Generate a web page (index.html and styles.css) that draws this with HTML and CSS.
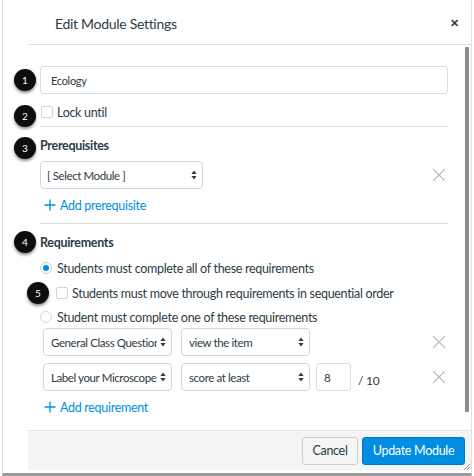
FILE: index.html
```html
<!DOCTYPE html>
<html>
<head>
<meta charset="utf-8">
<link rel="stylesheet" href="styles.css">
</head>
<body>
<div class="frame">
  <div class="dialog">
    <div class="header">
      <span class="title">Edit Module Settings</span>
      <span class="close">&#x2715;</span>
    </div>
    <div class="body">
      <div class="content">
        <div class="row name-row">
          <span class="badge b1">1</span>
          <div class="text-input name-input">Ecology</div>
        </div>
        <div class="row line lock-row">
          <span class="badge b2">2</span>
          <span class="checkbox"></span>
          <span class="label">Lock until</span>
        </div>
        <div class="divider"></div>
        <div class="row line heading-row first">
          <span class="badge b3">3</span>
          <span class="heading">Prerequisites</span>
        </div>
        <div class="row prereq-row">
          <div class="select sel-module"><span class="val">[ Select Module ]</span><svg class="arrows" width="6" height="10" viewBox="0 0 6 10"><path d="M3 0.5 L5.6 4 H0.4 Z M3 9.5 L5.6 6 H0.4 Z" fill="#2d3b45"/></svg></div>
          <svg class="remove" width="14" height="14" viewBox="0 0 14 14"><path d="M1 1 L13 13 M13 1 L1 13" stroke="#b8bdc1" stroke-width="1.2"/></svg>
        </div>
        <div class="row line add-row">
          <svg class="plus" width="12" height="12" viewBox="0 0 12 12"><path d="M6 0.5 V11.5 M0.5 6 H11.5" stroke="#008ee2" stroke-width="1.3"/></svg>
          <span class="link">Add prerequisite</span>
        </div>
        <div class="divider d2"></div>
        <div class="row line heading-row second">
          <span class="badge b4">4</span>
          <span class="heading">Requirements</span>
        </div>
        <div class="row line opt-row r1">
          <span class="radio checked"></span>
          <span class="label">Students must complete all of these requirements</span>
        </div>
        <div class="row line opt-row seq">
          <span class="badge b5">5</span>
          <span class="checkbox"></span>
          <span class="label">Students must move through requirements in sequential order</span>
        </div>
        <div class="row line opt-row r2">
          <span class="radio"></span>
          <span class="label">Student must complete one of these requirements</span>
        </div>
        <div class="row req-row first-req">
          <div class="select sel-req"><span class="val">General Class Question and</span><svg class="arrows" width="6" height="10" viewBox="0 0 6 10"><path d="M3 0.5 L5.6 4 H0.4 Z M3 9.5 L5.6 6 H0.4 Z" fill="#2d3b45"/></svg></div>
          <div class="select sel-req"><span class="val">view the item</span><svg class="arrows" width="6" height="10" viewBox="0 0 6 10"><path d="M3 0.5 L5.6 4 H0.4 Z M3 9.5 L5.6 6 H0.4 Z" fill="#2d3b45"/></svg></div>
          <svg class="remove" width="14" height="14" viewBox="0 0 14 14"><path d="M1 1 L13 13 M13 1 L1 13" stroke="#b8bdc1" stroke-width="1.2"/></svg>
        </div>
        <div class="row req-row second-req">
          <div class="select sel-req"><span class="val">Label your Microscope</span><svg class="arrows" width="6" height="10" viewBox="0 0 6 10"><path d="M3 0.5 L5.6 4 H0.4 Z M3 9.5 L5.6 6 H0.4 Z" fill="#2d3b45"/></svg></div>
          <div class="select sel-req"><span class="val">score at least</span><svg class="arrows" width="6" height="10" viewBox="0 0 6 10"><path d="M3 0.5 L5.6 4 H0.4 Z M3 9.5 L5.6 6 H0.4 Z" fill="#2d3b45"/></svg></div>
          <div class="text-input score">8</div>
          <span class="outof">/ 10</span>
          <svg class="remove" width="14" height="14" viewBox="0 0 14 14"><path d="M1 1 L13 13 M13 1 L1 13" stroke="#b8bdc1" stroke-width="1.2"/></svg>
        </div>
        <div class="row line add-row add-req">
          <svg class="plus" width="12" height="12" viewBox="0 0 12 12"><path d="M6 0.5 V11.5 M0.5 6 H11.5" stroke="#008ee2" stroke-width="1.3"/></svg>
          <span class="link">Add requirement</span>
        </div>
      </div>
      <div class="scrolltrack"><div class="thumb"></div></div>
    </div>
    <div class="footer">
      <button class="btn cancel">Cancel</button>
      <button class="btn primary">Update Module</button>
      <svg class="grip" width="7" height="7" viewBox="0 0 7 7"><path d="M7 1 L1 7 M7 4 L4 7" stroke="#888" stroke-width="0.9"/></svg>
    </div>
  </div>
</div>
</body>
</html>
```

FILE: styles.css
```css
* { box-sizing: border-box; }
html, body { margin: 0; padding: 0; background: #fff; }
body {
  font-family: Lato, "Open Sans", sans-serif;
  color: #2d3b45;
  font-size: 12.5px;
}
.frame {
  margin-left: 2px;
  width: 470px;
  height: 476px;
  border-left: 1px solid #dcdcdc;
  border-right: 1px solid #e2e2e2;
  border-bottom: 3px solid #9a9a9a;
  background: #fff;
}
.dialog {
  margin-left: 25px;
  width: 443px;
  display: flex;
  flex-direction: column;
}
.header {
  height: 45px;
  border-bottom: 1px solid #dedede;
  display: flex;
  align-items: center;
  justify-content: space-between;
  padding: 2px 12px 0 27px;
}
.title {
  font-size: 14px;
  letter-spacing: -0.3px;
  color: #2d3b45;
}
.close {
  font-size: 11px;
  font-weight: bold;
  color: #3a3a3a;
}
.body {
  height: 385px;
  display: flex;
}
.content {
  flex: 1;
  padding: 21px 0 0 12px;
}
.scrolltrack {
  width: 7px;
  padding: 2px 0 0 1px;
}
.thumb {
  width: 4px;
  height: 365px;
  background: #8e8e8e;
  border-radius: 1px;
}
.row {
  position: relative;
  display: flex;
  align-items: center;
}
.line { height: 20px; }
.badge {
  position: absolute;
  width: 22px;
  height: 22px;
  border-radius: 50%;
  background: #0d0d0d;
  color: #fff;
  font-size: 10px;
  display: flex;
  align-items: center;
  justify-content: center;
  box-shadow: 0 2px 3px rgba(0,0,0,0.45);
  z-index: 2;
}
.b1 { left: -26px; top: 3px; }
.b2 { left: -26px; top: 3px; }
.b3 { left: -26px; top: 2px; }
.b4 { left: -26px; top: -1px; }
.b5 { left: -13px; top: -1px; }
.text-input {
  border: 1px solid #d9dde0;
  border-radius: 3px;
  background: #fff;
  display: flex;
  align-items: center;
  font-size: 11px;
  letter-spacing: -0.3px;
}
.name-input {
  width: 408px;
  height: 28px;
  padding-left: 10px;
}
.lock-row { margin-top: 8px; }
.checkbox {
  width: 12px;
  height: 12px;
  border: 1px solid #d0d4d7;
  border-radius: 2px;
  background: #fff;
  margin: 0 4px 0 1px;
  flex: none;
}
.label { font-size: 12.5px; letter-spacing: -0.3px; }
.divider {
  height: 1px;
  width: 408px;
  background: #dcdcdc;
  margin-top: 4px;
}
.heading { font-weight: bold; font-size: 12.5px; letter-spacing: -0.3px; }
.heading-row.first { margin-top: 8px; }
.prereq-row { margin-top: 6px; width: 408px; justify-content: space-between; }
.select {
  height: 28px;
  border: 1px solid #d3d7da;
  border-radius: 4px;
  background: #fff;
  display: flex;
  align-items: center;
  padding: 0 5px 0 7px;
  font-size: 11.5px;
  letter-spacing: -0.4px;
}
.select .val { flex: 1; min-width: 0; white-space: nowrap; overflow: hidden; }
.arrows { flex: none; margin-left: 3px; }
.sel-module { width: 163px; padding-left: 6px; }
.remove { margin-right: 2px; flex: none; }
.add-row { margin-top: 6px; padding-left: 4px; }
.plus { margin-right: 4px; }
.link { color: #008ee2; font-size: 12.5px; letter-spacing: -0.3px; }
.divider.d2 { margin-top: 8px; }
.heading-row.second { margin-top: 8px; }
.radio {
  width: 12px;
  height: 12px;
  border-radius: 50%;
  border: 1px solid #d3d7da;
  background: #fff;
  position: relative;
  margin-right: 5px;
  flex: none;
}
.radio.checked { border-color: #c5cbd0; }
.radio.checked::after {
  content: "";
  position: absolute;
  left: 2px; top: 2px;
  width: 6px; height: 6px;
  border-radius: 50%;
  background: #008ee2;
}
.r1 { margin-top: 6px; }
.seq { margin-top: 5px; padding-left: 15px; }
.r2 { margin-top: 4px; }
.req-row { width: 408px; padding-left: 3px; }
.first-req { margin-top: 1px; }
.second-req { margin-top: 7px; }
.sel-req { width: 129px; margin-right: 9px; flex: none; }
.sel-req + .sel-req { margin-right: 6px; }
.score {
  width: 35px;
  height: 28px;
  padding-left: 7px;
  font-size: 11.5px;
}
.outof { margin-left: 7px; font-size: 12px; padding-top: 6px; letter-spacing: -0.2px; }
.req-row .remove { margin-left: auto; }
.add-req { margin-top: 6px; }
.footer {
  height: 40px;
  background: #f4f4f4;
  border-top: 1px solid #e6e6e6;
  display: flex;
  align-items: center;
  justify-content: flex-end;
  padding-right: 6px;
  position: relative;
}
.btn {
  height: 28px;
  font-family: Lato, sans-serif;
  font-size: 12.5px;
  letter-spacing: -0.3px;
  border-radius: 3px;
  padding: 0;
}
.cancel {
  width: 56px;
  background: #f5f5f5;
  border: 1px solid #c7cdd1;
  color: #2d3b45;
  margin-right: 4px;
}
.primary {
  width: 103px;
  background: #008ee2;
  border: 1px solid #0077c2;
  color: #fff;
}
.grip { position: absolute; right: 1px; bottom: 0; }
```
